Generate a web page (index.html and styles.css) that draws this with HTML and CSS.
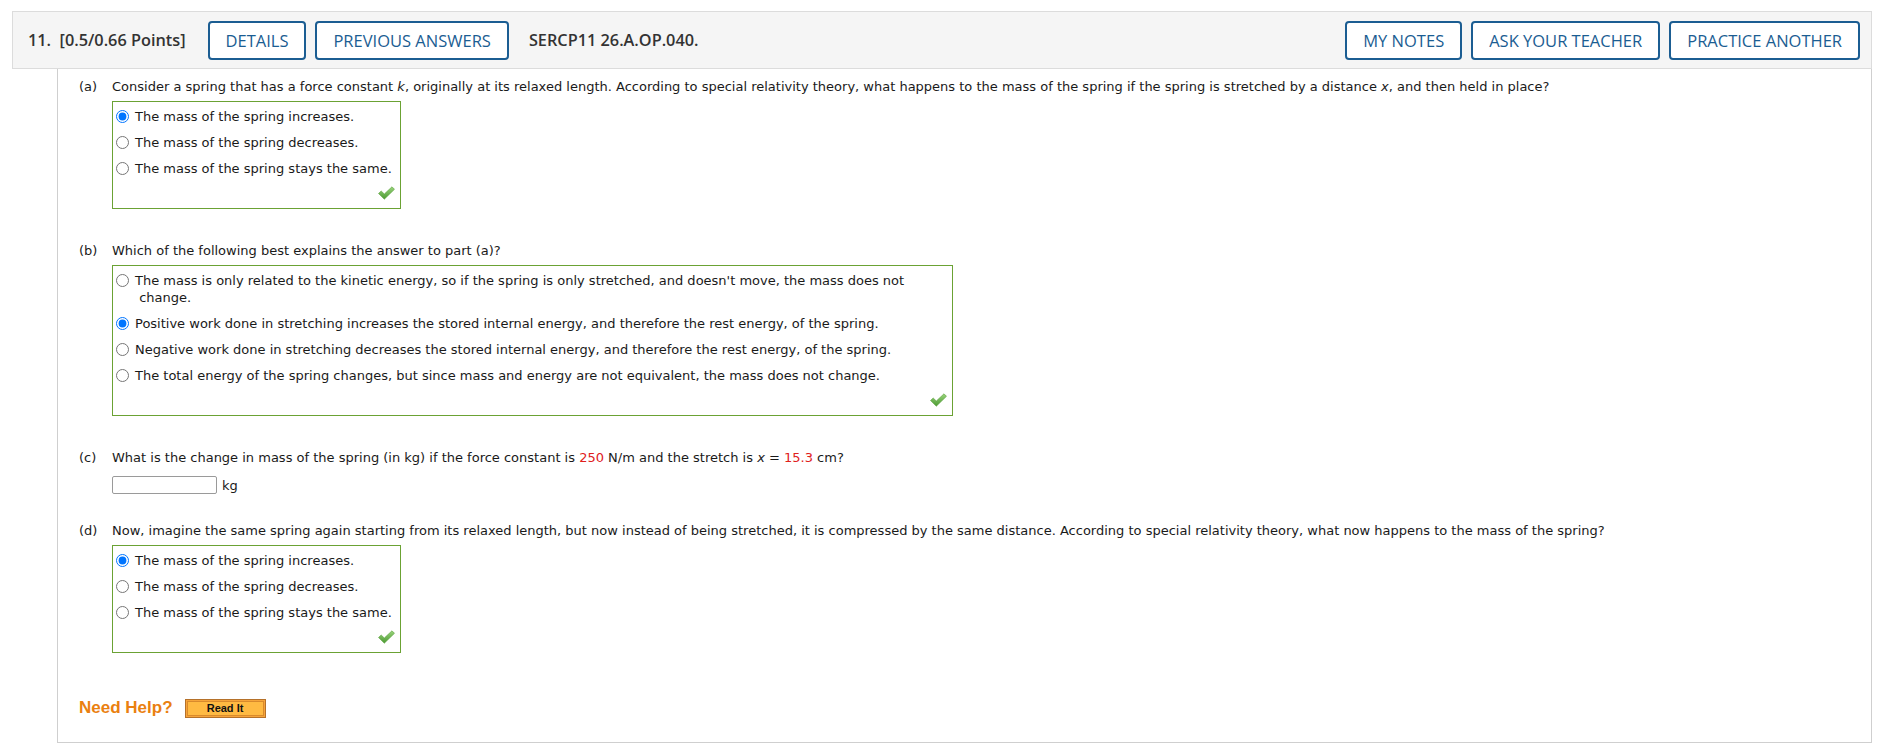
FILE: index.html
```html
<!DOCTYPE html>
<html>
<head>
<meta charset="utf-8">
<link rel="stylesheet" href="styles.css">
</head>
<body>
<div class="question">
  <div class="qheader">
    <div class="qnum">11.&nbsp; [0.5/0.66 Points]</div>
    <button class="hbtn first">DETAILS</button>
    <button class="hbtn">PREVIOUS ANSWERS</button>
    <div class="qcode">SERCP11 26.A.OP.040.</div>
    <div class="spacer"></div>
    <button class="hbtn">MY NOTES</button>
    <button class="hbtn">ASK YOUR TEACHER</button>
    <button class="hbtn">PRACTICE ANOTHER</button>
  </div>
  <div class="qbody">
    <div class="part">
      <div class="plabel">(a)</div>
      <div class="pbody">
        <div class="qtext">Consider a spring that has a force constant <i>k</i>, originally at its relaxed length. According to special relativity theory, what happens to the mass of the spring if the spring is stretched by a distance <i>x</i>, and then held in place?</div>
        <div class="choices">
          <label class="choice"><input type="radio" name="a" checked><span>The mass of the spring increases.</span></label>
          <label class="choice"><input type="radio" name="a"><span>The mass of the spring decreases.</span></label>
          <label class="choice"><input type="radio" name="a"><span>The mass of the spring stays the same.</span></label>
          <div class="check-row"><svg class="check" width="17" height="14" viewBox="0 0 17 14"><defs><linearGradient id="g1" x1="0" y1="0" x2="0" y2="1"><stop offset="0" stop-color="#9ad47c"/><stop offset="1" stop-color="#4c9a33"/></linearGradient></defs><polygon points="0.5,7.5 3.2,5 6.3,8 14,0.8 16.5,3.3 6.3,13.2" fill="url(#g1)" stroke="#5aa13c" stroke-width="0.6"/></svg></div>
        </div>
      </div>
    </div>

    <div class="part">
      <div class="plabel">(b)</div>
      <div class="pbody">
        <div class="qtext">Which of the following best explains the answer to part (a)?</div>
        <div class="choices wide">
          <label class="choice"><input type="radio" name="b"><span>The mass is only related to the kinetic energy, so if the spring is only stretched, and doesn't move, the mass does not<br>&nbsp;change.</span></label>
          <label class="choice"><input type="radio" name="b" checked><span>Positive work done in stretching increases the stored internal energy, and therefore the rest energy, of the spring.</span></label>
          <label class="choice"><input type="radio" name="b"><span>Negative work done in stretching decreases the stored internal energy, and therefore the rest energy, of the spring.</span></label>
          <label class="choice"><input type="radio" name="b"><span>The total energy of the spring changes, but since mass and energy are not equivalent, the mass does not change.</span></label>
          <div class="check-row"><svg class="check" width="17" height="14" viewBox="0 0 17 14"><defs><linearGradient id="g2" x1="0" y1="0" x2="0" y2="1"><stop offset="0" stop-color="#9ad47c"/><stop offset="1" stop-color="#4c9a33"/></linearGradient></defs><polygon points="0.5,7.5 3.2,5 6.3,8 14,0.8 16.5,3.3 6.3,13.2" fill="url(#g2)" stroke="#5aa13c" stroke-width="0.6"/></svg></div>
        </div>
      </div>
    </div>

    <div class="part partc">
      <div class="plabel">(c)</div>
      <div class="pbody">
        <div class="qtext">What is the change in mass of the spring (in kg) if the force constant is <span class="red">250</span> N/m and the stretch is <i>x</i> = <span class="red">15.3</span> cm?</div>
        <div class="answer"><input type="text" class="tinput"><span class="unit">kg</span></div>
      </div>
    </div>

    <div class="part partd">
      <div class="plabel">(d)</div>
      <div class="pbody">
        <div class="qtext">Now, imagine the same spring again starting from its relaxed length, but now instead of being stretched, it is compressed by the same distance. According to special relativity theory, what now happens to the mass of the spring?</div>
        <div class="choices">
          <label class="choice"><input type="radio" name="d" checked><span>The mass of the spring increases.</span></label>
          <label class="choice"><input type="radio" name="d"><span>The mass of the spring decreases.</span></label>
          <label class="choice"><input type="radio" name="d"><span>The mass of the spring stays the same.</span></label>
          <div class="check-row"><svg class="check" width="17" height="14" viewBox="0 0 17 14"><defs><linearGradient id="g3" x1="0" y1="0" x2="0" y2="1"><stop offset="0" stop-color="#9ad47c"/><stop offset="1" stop-color="#4c9a33"/></linearGradient></defs><polygon points="0.5,7.5 3.2,5 6.3,8 14,0.8 16.5,3.3 6.3,13.2" fill="url(#g3)" stroke="#5aa13c" stroke-width="0.6"/></svg></div>
        </div>
      </div>
    </div>

    <div class="help">
      <span class="need">Need Help?</span>
      <button class="readit"><span>Read It</span></button>
    </div>
  </div>
</div>
</body>
</html>
```

FILE: styles.css
```css
html, body {
  margin: 0;
  padding: 0;
  background: #fff;
}
body {
  padding: 11px 9px 0 12px;
}
.question {
  width: 1860px;
}
.qheader {
  display: flex;
  align-items: center;
  height: 56px;
  background: #f5f5f5;
  border: 1px solid #dcdcdc;
  padding: 0 11px 0 15px;
  font-family: "Open Sans", sans-serif;
  font-size: 16px;
  color: #333;
}
.qnum, .qcode {
  font-weight: 600;
}
.qnum {
  font-size: 16.3px;
}
.qcode {
  margin-left: 20px;
  font-size: 16.3px;
}
.spacer {
  flex: 1;
}
.hbtn {
  font-family: "Open Sans", sans-serif;
  font-size: 16.5px;
  color: #1b5d92;
  background: #fff;
  border: 2px solid #1b5d92;
  border-radius: 4px;
  height: 39px;
  padding: 0 16px;
  margin-left: 9px;
}
.hbtn.first {
  margin-left: 22px;
}
.qbody {
  margin-left: 45px;
  border: 1px solid #cfcfcf;
  border-top: none;
  padding: 9px 0 24px 21px;
  font-family: "DejaVu Sans", Verdana, sans-serif;
  font-size: 13px;
  color: #1a1a1a;
}
.part {
  display: flex;
  margin-bottom: 33px;
}
.part.partc {
  margin-bottom: 28px;
}
.part.partd {
  margin-bottom: 45px;
}
.plabel {
  width: 33px;
  flex: none;
  line-height: 17px;
}
.pbody {
  flex: 1;
}
.qtext {
  line-height: 17px;
}
.choices {
  margin-top: 6px;
  border: 1px solid #6ba234;
  width: 280px;
  padding: 6px 7px 9px 0;
}
.choices.wide {
  width: 832px;
}
.choice {
  display: flex;
  align-items: flex-start;
  line-height: 17px;
  margin-bottom: 9px;
}
.choice input {
  margin: 2px 6px 0 3px;
  width: 13px;
  height: 13px;
  flex: none;
}
.check-row {
  height: 14px;
  margin-top: 1px;
  margin-bottom: -1px;
  display: flex;
  justify-content: flex-end;
}
.check {
  display: block;
  margin-right: -2px;
}
.red {
  color: #e0201c;
}
.answer {
  margin-top: 10px;
  display: flex;
  align-items: center;
}
.tinput {
  width: 101px;
  height: 14px;
  border: 1px solid #9a9a9a;
  border-radius: 2px;
  padding: 1px;
  margin: 0;
}
.unit {
  margin-left: 5px;
}
.help {
  display: flex;
  align-items: center;
}
.need {
  font-family: "Liberation Sans", Arial, sans-serif;
  font-weight: bold;
  font-size: 17px;
  color: #ea8010;
}
.readit {
  margin-left: 12px;
  width: 81px;
  height: 19px;
  padding: 1px;
  border: 1px solid #b5712a;
  background: #f6a43a;
  font-family: "Liberation Sans", Arial, sans-serif;
  font-weight: bold;
  font-size: 11px;
  color: #111;
  display: flex;
}
.readit span {
  flex: 1;
  border: 1px solid #d98a2c;
  background: #ffba42;
  line-height: 13px;
}
```
